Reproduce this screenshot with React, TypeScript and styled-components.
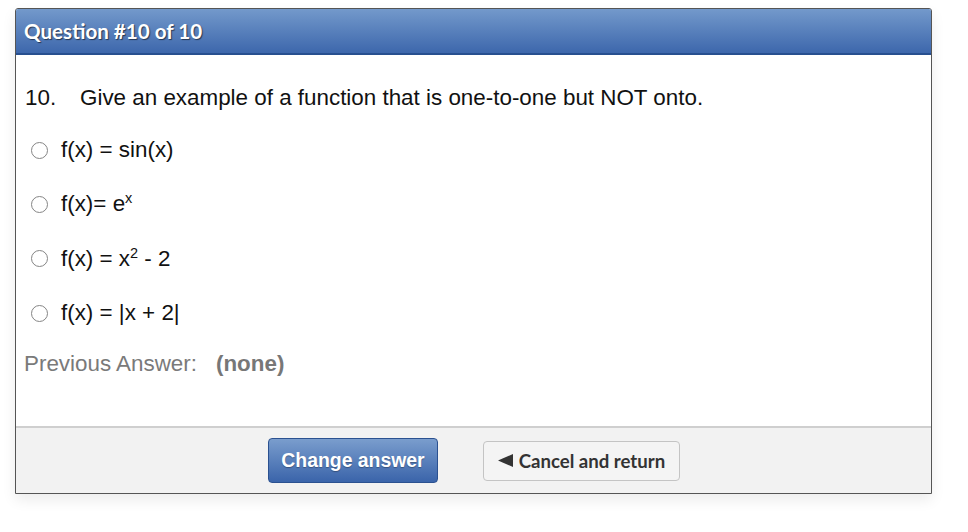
import React from "react";
import styled, { createGlobalStyle } from "styled-components";

const GlobalStyle = createGlobalStyle`
  html, body {
    margin: 0;
    padding: 0;
    background: #ffffff;
  }
  body {
    font-family: "Liberation Sans", Arial, sans-serif;
  }
`;

const Page = styled.div`
  padding: 8px 36px 30px 15px;
`;

const Panel = styled.div`
  width: 917px;
  border: 1px solid #555;
  border-radius: 3px 3px 0 0;
  box-shadow: 0 6px 14px rgba(0, 0, 0, 0.08);
  background: #fff;
  box-sizing: border-box;
`;

const Header = styled.div`
  height: 46px;
  box-sizing: border-box;
  padding: 0 0 1px 8px;
  display: flex;
  align-items: center;
  background: linear-gradient(#7399cb, #3d67ac);
  border-bottom: 2px solid #274f8f;
  border-radius: 2px 2px 0 0;
`;

const Title = styled.h2`
  margin: 0;
  font-family: Lato, "Noto Sans", sans-serif;
  font-weight: 700;
  font-size: 20.6px;
  color: #fff;
  text-shadow: 1px 1px 1px rgba(0, 0, 0, 0.55);
`;

const Body = styled.div`
  padding: 30px 8px 49px 8px;
`;

const QuestionRow = styled.div`
  display: flex;
  font-size: 22.4px;
  color: #111;
  line-height: 26px;
  margin-bottom: 26px;
`;

const QNum = styled.span`
  width: 55px;
  padding-left: 1px;
`;

const Options = styled.div`
  display: flex;
  flex-direction: column;
  gap: 28.4px;
  padding-left: 7px;
`;

const Option = styled.label`
  display: flex;
  align-items: center;
  gap: 13px;
  font-size: 22.4px;
  line-height: 26px;
  color: #111;
`;

const Radio = styled.span`
  width: 17px;
  height: 17px;
  border: 1.5px solid #858585;
  border-radius: 50%;
  background: #fff;
  box-sizing: border-box;
  flex: none;
`;

const Sup = styled.sup`
  font-size: 14.5px;
  line-height: 0;
`;

const Previous = styled.div`
  margin-top: 25px;
  font-size: 22.4px;
  line-height: 26px;
  color: #7a7a7a;
  display: flex;
  gap: 19px;
`;

const None = styled.span`
  font-weight: 700;
  color: #777;
`;

const Footer = styled.div`
  height: 65px;
  background: #f2f2f2;
  border-top: 2px solid #cfcfcf;
  display: flex;
  align-items: center;
  padding-left: 252px;
  gap: 45px;
`;

const PrimaryButton = styled.button`
  width: 170px;
  height: 45px;
  border: 1px solid #2b5190;
  border-radius: 4px;
  background: linear-gradient(#7a9dcd, #3a64aa);
  color: #fff;
  font-family: "Liberation Sans", Arial, sans-serif;
  font-weight: 700;
  font-size: 19.4px;
  text-shadow: 0 1px 1px rgba(0, 0, 0, 0.3);
  padding: 0;
`;

const SecondaryButton = styled.button`
  width: 197px;
  height: 40px;
  border: 1px solid #c4c4c4;
  border-radius: 4px;
  background: #f4f4f4;
  color: #333;
  font-family: Lato, "Noto Sans", sans-serif;
  font-weight: 700;
  font-size: 18.6px;
  padding: 0;
  display: flex;
  align-items: center;
  justify-content: center;
  gap: 6px;
`;

const Arrow = () => (
  <svg width="15" height="13" viewBox="0 0 15 13" aria-hidden="true">
    <path d="M0 6.5 L15 0 L15 13 Z" fill="#333" />
  </svg>
);

const App: React.FC = () => {
  return (
    <>
      <GlobalStyle />
      <Page>
        <Panel>
          <Header>
            <Title>Question #10 of 10</Title>
          </Header>
          <Body>
            <QuestionRow>
              <QNum>10.</QNum>
              <span>Give an example of a function that is one-to-one but NOT onto.</span>
            </QuestionRow>
            <Options>
              <Option>
                <Radio />
                <span>f(x) = sin(x)</span>
              </Option>
              <Option>
                <Radio />
                <span>
                  f(x)= e<Sup>x</Sup>
                </span>
              </Option>
              <Option>
                <Radio />
                <span>
                  f(x) = x<Sup>2</Sup> - 2
                </span>
              </Option>
              <Option>
                <Radio />
                <span>f(x) = |x + 2|</span>
              </Option>
            </Options>
            <Previous>
              <span>Previous Answer:</span>
              <None>(none)</None>
            </Previous>
          </Body>
          <Footer>
            <PrimaryButton>Change answer</PrimaryButton>
            <SecondaryButton>
              <Arrow />
              Cancel and return
            </SecondaryButton>
          </Footer>
        </Panel>
      </Page>
    </>
  );
};

export default App;
